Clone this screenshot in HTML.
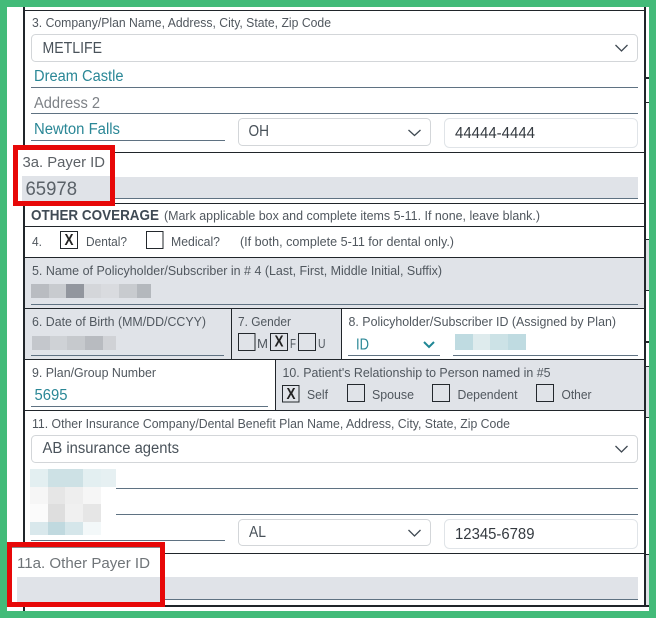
<!DOCTYPE html>
<html><head><meta charset="utf-8"><style>
html,body{margin:0;padding:0;background:#fff;width:656px;height:618px;overflow:hidden}
svg{display:block}
text{font-family:"Liberation Sans",Arial,sans-serif;fill:#50575e;font-size:13px;white-space:pre}
.t{fill:#2a8796;font-size:15.5px}
.v{fill:#49525a;font-size:15.5px}
.x{font-weight:bold;fill:#222;font-size:16px}
.box{fill:none;stroke:#23282d;stroke-width:1}
.sel{fill:#fff;stroke:#d3d6d9;stroke-width:1}
.zip{fill:#fff;stroke:#e0e4e8;stroke-width:1}
.ul{stroke:#5f7282;stroke-width:1}
.ln{stroke:#20252a;stroke-width:1}
.ch{fill:none;stroke:#3f4952;stroke-width:1.3}
</style></head><body>
<svg xmlns="http://www.w3.org/2000/svg" width="656" height="618" viewBox="0 0 656 618">
<rect width="656" height="618" fill="#43bb79"/>
<rect x="7" y="7" width="642" height="604" fill="#fff"/>
<rect x="646" y="240" width="3" height="50" fill="#e0e3e7"/>
<rect x="646" y="367" width="3" height="50" fill="#e0e3e7"/>
<rect x="646" y="554" width="3" height="51" fill="#e0e3e7"/>
<rect x="25" y="258" width="619" height="50" fill="#e0e3e8"/>
<rect x="25" y="309" width="316" height="51" fill="#e0e3e8"/>
<rect x="276" y="360" width="368" height="50" fill="#e0e3e8"/>
<rect x="22" y="177" width="616" height="21" fill="#e0e3e8"/>
<rect x="17" y="577" width="621" height="22" fill="#e0e3e8"/>
<g class="ln">
<line x1="25" x2="645" y1="10.5" y2="10.5" class="ln"/>
<line x1="25" x2="645" y1="152.5" y2="152.5" class="ln"/>
<line x1="25" x2="645" y1="203.5" y2="203.5" class="ln"/>
<line x1="25" x2="645" y1="226.5" y2="226.5" class="ln"/>
<line x1="25" x2="645" y1="257.5" y2="257.5" class="ln"/>
<line x1="25" x2="645" y1="308.5" y2="308.5" class="ln"/>
<line x1="25" x2="645" y1="359.5" y2="359.5" class="ln"/>
<line x1="25" x2="645" y1="410.5" y2="410.5" class="ln"/>
<line x1="25" x2="645" y1="553.5" y2="553.5" class="ln"/>
<line x1="231.5" x2="231.5" y1="309" y2="359" class="ln"/>
<line x1="341.5" x2="341.5" y1="309" y2="359" class="ln"/>
<line x1="275.5" x2="275.5" y1="360" y2="410" class="ln"/>
</g>
<rect x="23" y="7" width="2" height="604" fill="#20252a"/>
<rect x="644" y="7" width="2" height="598" fill="#20252a"/>
<rect x="25" y="605" width="624" height="2" fill="#20252a"/>
<rect x="646" y="77" width="3" height="2" fill="#20252a"/>
<rect x="646" y="102" width="3" height="1" fill="#20252a"/>
<rect x="646" y="239" width="3" height="1" fill="#20252a"/>
<rect x="646" y="290" width="3" height="1" fill="#20252a"/>
<rect x="646" y="341" width="3" height="2" fill="#20252a"/>
<rect x="646" y="366" width="3" height="1" fill="#20252a"/>
<rect x="646" y="417" width="3" height="1" fill="#20252a"/>
<rect x="646" y="554" width="3" height="1" fill="#20252a"/>

<text x="32" y="27" textLength="299" lengthAdjust="spacingAndGlyphs">3. Company/Plan Name, Address, City, State, Zip Code</text>
<rect class="sel" x="31.5" y="34.5" width="606" height="27" rx="4"/>
<text class="v" x="42.5" y="53" textLength="59.5" lengthAdjust="spacingAndGlyphs">METLIFE</text>
<polyline class="ch" points="615.5,45 621.5,51 627.5,45"/>
<text class="t" x="34" y="81" textLength="89.5" lengthAdjust="spacingAndGlyphs">Dream Castle</text>
<line class="ul" x1="31" x2="638" y1="87.5" y2="87.5"/>
<text x="34" y="108" style="font-size:15.5px;fill:#7d8186" textLength="66" lengthAdjust="spacingAndGlyphs">Address 2</text>
<line class="ul" x1="31" x2="638" y1="113.5" y2="113.5"/>
<text class="t" x="34" y="134" textLength="86" lengthAdjust="spacingAndGlyphs">Newton Falls</text>
<line class="ul" x1="31" x2="225" y1="140.5" y2="140.5"/>
<rect class="sel" x="238.5" y="118.5" width="192" height="27" rx="4"/>
<text class="v" x="248.5" y="136" textLength="20.5" lengthAdjust="spacingAndGlyphs">OH</text>
<polyline class="ch" points="408.5,130 414.5,135.5 420.5,130"/>
<rect class="zip" x="444.5" y="118.5" width="193" height="29" rx="5"/>
<text class="v" x="455" y="138" textLength="80" lengthAdjust="spacingAndGlyphs" style="fill:#343a40">44444-4444</text>

<rect x="13" y="145" width="102" height="61" fill="#e70808"/>
<rect x="18" y="150" width="92" height="51" fill="#fff"/>
<rect x="22" y="176" width="88" height="25" fill="#e0e3e8"/>
<text x="22.5" y="167" style="font-size:15px;fill:#5c6166" textLength="82.5" lengthAdjust="spacingAndGlyphs">3a. Payer ID</text>
<text x="25.5" y="195" style="font-size:19px;fill:#5a6168" textLength="51.5" lengthAdjust="spacingAndGlyphs">65978</text>
<line class="ul" x1="115" x2="638" y1="198.5" y2="198.5"/>

<text x="31" y="220" style="font-size:15px;font-weight:bold;fill:#3f4a54" textLength="128" lengthAdjust="spacingAndGlyphs">OTHER COVERAGE</text>
<text x="164" y="220" textLength="376" lengthAdjust="spacingAndGlyphs">(Mark applicable box and complete items 5-11. If none, leave blank.)</text>

<text x="32" y="246" textLength="10" lengthAdjust="spacingAndGlyphs">4.</text>
<rect class="box" x="60.5" y="231.5" width="17" height="17"/>
<text class="x" x="64.5" y="245" textLength="9" lengthAdjust="spacingAndGlyphs">X</text>
<text x="86" y="246" textLength="41" lengthAdjust="spacingAndGlyphs">Dental?</text>
<rect class="box" x="146.5" y="231.5" width="16.5" height="17"/>
<text x="171" y="246" textLength="49" lengthAdjust="spacingAndGlyphs">Medical?</text>
<text x="240" y="246" textLength="214" lengthAdjust="spacingAndGlyphs">(If both, complete 5-11 for dental only.)</text>

<text x="32" y="275" textLength="410" lengthAdjust="spacingAndGlyphs">5. Name of Policyholder/Subscriber in # 4 (Last, First, Middle Initial, Suffix)</text>
<rect x="31" y="284" width="18" height="14" fill="#b9bcc1"/>
<rect x="49" y="284" width="17" height="14" fill="#c8cbcf"/>
<rect x="66" y="284" width="18" height="14" fill="#92969e"/>
<rect x="84" y="284" width="17" height="14" fill="#d4d6da"/>
<rect x="101" y="284" width="18" height="14" fill="#d9dbdf"/>
<rect x="119" y="284" width="18" height="14" fill="#c8cbcf"/>
<rect x="137" y="284" width="14" height="14" fill="#b4b8bd"/>
<line class="ul" x1="31" x2="638" y1="304.5" y2="304.5"/>

<text x="32" y="326" textLength="174" lengthAdjust="spacingAndGlyphs">6. Date of Birth (MM/DD/CCYY)</text>
<rect x="32" y="336" width="18" height="14" fill="#c4c7cc"/>
<rect x="50" y="336" width="17" height="14" fill="#cfd2d6"/>
<rect x="67" y="336" width="18" height="14" fill="#c6c9cd"/>
<rect x="85" y="336" width="18" height="14" fill="#b8bbc0"/>
<rect x="103" y="336" width="13" height="14" fill="#d0d2d6"/>
<line class="ul" x1="31" x2="224" y1="355.5" y2="355.5"/>

<text x="238" y="326" textLength="53" lengthAdjust="spacingAndGlyphs">7. Gender</text>
<rect class="box" x="238.5" y="333.5" width="16.5" height="17"/>
<text x="257" y="348" textLength="11" lengthAdjust="spacingAndGlyphs">M</text>
<rect class="box" x="270.5" y="333.5" width="17" height="17"/>
<text class="x" x="274.5" y="346.5" textLength="9" lengthAdjust="spacingAndGlyphs">X</text>
<text x="290" y="348" textLength="6" lengthAdjust="spacingAndGlyphs">F</text>
<rect class="box" x="298.5" y="333.5" width="17" height="17"/>
<text x="318" y="348" textLength="7.5" lengthAdjust="spacingAndGlyphs">U</text>

<text x="348.5" y="326" textLength="267.5" lengthAdjust="spacingAndGlyphs">8. Policyholder/Subscriber ID (Assigned by Plan)</text>
<text class="t" x="356" y="349.5" textLength="13" lengthAdjust="spacingAndGlyphs">ID</text>
<polyline fill="none" stroke="#1f8795" stroke-width="2" points="424,342 429,347 434,342"/>
<line class="ul" x1="348" x2="440" y1="355.5" y2="355.5"/>
<rect x="455" y="334" width="18" height="16" fill="#bfdbe1"/>
<rect x="473" y="334" width="17" height="16" fill="#deebed"/>
<rect x="490" y="334" width="18" height="16" fill="#cce2e6"/>
<rect x="508" y="334" width="18" height="16" fill="#bfdbe1"/>
<line class="ul" x1="453" x2="638" y1="355.5" y2="355.5"/>

<text x="32" y="377" textLength="124" lengthAdjust="spacingAndGlyphs">9. Plan/Group Number</text>
<text class="t" x="34.5" y="400" textLength="33" lengthAdjust="spacingAndGlyphs">5695</text>
<line class="ul" x1="31" x2="268" y1="406.5" y2="406.5"/>

<text x="282.5" y="377" textLength="268" lengthAdjust="spacingAndGlyphs">10. Patient's Relationship to Person named in #5</text>
<rect class="box" x="282.5" y="385.5" width="16.5" height="16.5"/>
<text class="x" x="286.5" y="399" textLength="9" lengthAdjust="spacingAndGlyphs">X</text>
<text x="307" y="399" textLength="21" lengthAdjust="spacingAndGlyphs">Self</text>
<rect class="box" x="347.5" y="384.5" width="17" height="17"/>
<text x="372" y="399" textLength="42" lengthAdjust="spacingAndGlyphs">Spouse</text>
<rect class="box" x="432.5" y="384.5" width="17" height="17"/>
<text x="457.5" y="399" textLength="60" lengthAdjust="spacingAndGlyphs">Dependent</text>
<rect class="box" x="536.5" y="384.5" width="17" height="17"/>
<text x="561.5" y="399" textLength="30" lengthAdjust="spacingAndGlyphs">Other</text>

<text x="32" y="428" textLength="478" lengthAdjust="spacingAndGlyphs">11. Other Insurance Company/Dental Benefit Plan Name, Address, City, State, Zip Code</text>
<rect class="sel" x="31.5" y="435.5" width="606" height="27" rx="4"/>
<text class="v" x="42.5" y="453" textLength="136.5" lengthAdjust="spacingAndGlyphs">AB insurance agents</text>
<polyline class="ch" points="615.5,446 621.5,452 627.5,446"/>
<line class="ul" x1="116" x2="638" y1="488.5" y2="488.5"/>
<line class="ul" x1="116" x2="638" y1="514.5" y2="514.5"/>
<line class="ul" x1="31" x2="225" y1="540.5" y2="540.5"/>
<rect x="30" y="469" width="18" height="18" fill="#e3eff1"/>
<rect x="48" y="469" width="35" height="18" fill="#cde1e5"/>
<rect x="83" y="469" width="18" height="18" fill="#e3eff1"/>
<rect x="101" y="469" width="15" height="18" fill="#e6f0f2"/>
<rect x="30" y="487" width="18" height="17" fill="#f6f6f6"/>
<rect x="48" y="487" width="17" height="17" fill="#e6e6e6"/>
<rect x="65" y="487" width="18" height="17" fill="#eeeeee"/>
<rect x="83" y="487" width="18" height="17" fill="#f6f6f6"/>
<rect x="30" y="504" width="18" height="18" fill="#fbfbfb"/>
<rect x="48" y="504" width="17" height="18" fill="#dedede"/>
<rect x="65" y="504" width="18" height="18" fill="#f0f0f0"/>
<rect x="83" y="504" width="18" height="18" fill="#e6e6e6"/>
<rect x="30" y="522" width="18" height="13" fill="#d9e8ec"/>
<rect x="48" y="522" width="17" height="13" fill="#c0d9df"/>
<rect x="65" y="522" width="18" height="13" fill="#d5e6ea"/>
<rect x="83" y="522" width="18" height="13" fill="#f3f8f9"/>
<rect class="sel" x="238.5" y="519.5" width="192" height="26" rx="4"/>
<text class="v" x="249" y="537" textLength="17" lengthAdjust="spacingAndGlyphs">AL</text>
<polyline class="ch" points="408.5,530 414.5,536 420.5,530"/>
<rect class="zip" x="444.5" y="519.5" width="193" height="29" rx="5"/>
<text class="v" x="455" y="539" textLength="79.5" lengthAdjust="spacingAndGlyphs" style="fill:#343a40">12345-6789</text>

<line class="ul" x1="165" x2="638" y1="599.5" y2="599.5"/>
<rect x="7" y="542" width="158" height="65" fill="#e70808"/>
<rect x="12" y="547" width="148" height="55" fill="#fff"/>
<rect x="12" y="547" width="148" height="1" fill="#8a8c8e"/>
<rect x="17" y="577" width="143" height="25" fill="#e0e3e8"/>
<text x="17" y="568" style="font-size:15px;fill:#6f7478" textLength="133" lengthAdjust="spacingAndGlyphs">11a. Other Payer ID</text>
</svg>
</body></html>
